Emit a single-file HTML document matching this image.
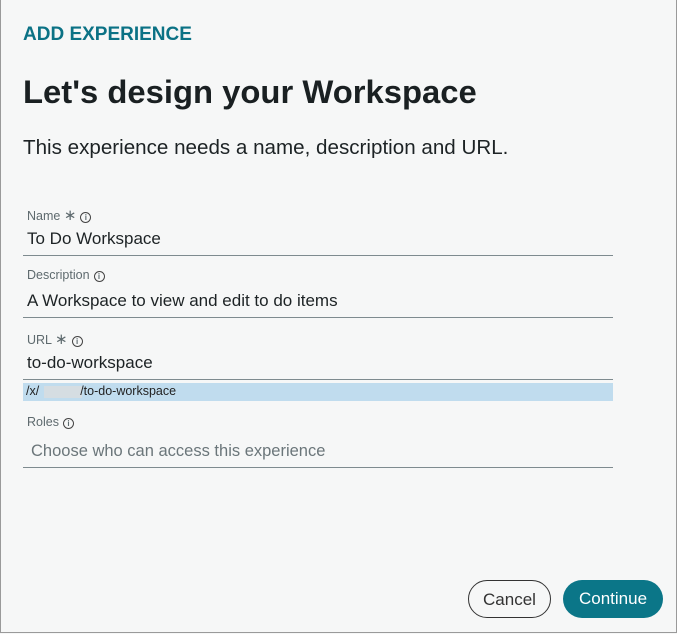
<!DOCTYPE html>
<html><head><style>
body{margin:0;width:677px;height:634px;background:#f6f7f7;font-family:"Liberation Sans",sans-serif;position:relative;overflow:hidden;color:#1d2325}
.frame{position:absolute;left:0;top:0;width:675px;height:632px;border:1px solid #9a9a9a;border-top:none;}
.a{position:absolute;white-space:nowrap}
.lbl{font-size:12.5px;color:#5e6a6e}
.val{font-size:17px;color:#1d2325}
.line{position:absolute;left:23px;width:590px;height:1px;background:#7e8b8f}
.i{display:inline-block;width:9px;height:9px;border:1px solid #444;border-radius:50%;font-size:8px;line-height:9px;text-align:center;vertical-align:0px;margin-left:4px;font-weight:bold}
.btn{position:absolute;top:580px;height:38px;border-radius:20px;font-size:17px;line-height:38px;text-align:center;box-sizing:border-box}
</style></head><body>
<div class="frame"></div>
<div class="a" style="left:23px;top:24px;font-size:19px;font-weight:bold;color:#0b7285">ADD EXPERIENCE</div>
<div class="a" style="left:23px;top:73px;font-size:32.8px;font-weight:bold;color:#1a2022">Let's design your Workspace</div>
<div class="a" style="left:23px;top:136px;font-size:20.6px">This experience needs a name, description and URL.</div>

<div class="a lbl" style="left:27px;top:206px">Name <span style="font-size:15px">∗</span><span class="i">i</span></div>
<div class="a val" style="left:27px;top:229px">To Do Workspace</div>
<div class="line" style="top:255px"></div>

<div class="a lbl" style="left:27px;top:268px">Description<span class="i">i</span></div>
<div class="a val" style="left:27px;top:291px">A Workspace to view and edit to do items</div>
<div class="line" style="top:317px"></div>

<div class="a lbl" style="left:27px;top:330px">URL <span style="font-size:15px">∗</span><span class="i">i</span></div>
<div class="a val" style="left:27px;top:353px">to-do-workspace</div>
<div class="line" style="top:379px"></div>
<div class="a" style="left:23px;top:383px;width:590px;height:18px;background:#c0dcee"></div>
<div class="a" style="left:44px;top:386px;width:38px;height:12px;background:#d5dde2"></div>
<div class="a" style="left:26px;top:384px;font-size:12.5px;color:#222">/x/<span style="display:inline-block;width:41px"></span>/to-do-workspace</div>

<div class="a lbl" style="left:27px;top:415px">Roles<span class="i">i</span></div>
<div class="a" style="left:31px;top:442px;font-size:16.5px;color:#6b767a">Choose who can access this experience</div>
<div class="line" style="top:467px"></div>

<div class="btn" style="left:468px;width:83px;border:1px solid #333;color:#333">Cancel</div>
<div class="btn" style="left:563px;width:100px;background:#0b7688;color:#fff">Continue</div>
</body></html>
